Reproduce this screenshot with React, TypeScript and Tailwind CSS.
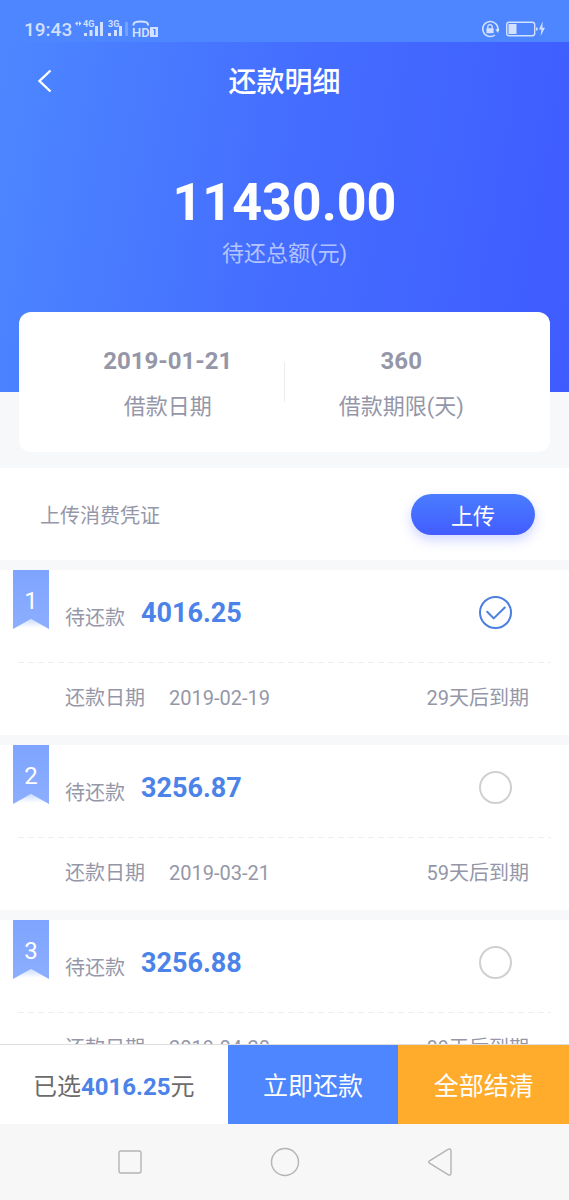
import { useState } from "react";

const loan = [
  { value: "2019-01-21", label: "借款日期" },
  { value: "360", label: "借款期限(天)" },
];

const bills = [
  { amount: "4016.25", date: "2019-02-19", due: "29天后到期" },
  { amount: "3256.87", date: "2019-03-21", due: "59天后到期" },
  { amount: "3256.88", date: "2019-04-20", due: "89天后到期" },
];

function StatusBar() {
  return (
    <div className="flex h-[42px] shrink-0 items-end justify-between bg-[#4d86ff] px-6 text-white/75">
      <div className="flex items-end">
        <span className="w-[51px] text-[19px] leading-6 font-medium">19:43</span>
        <svg width="86" height="24" viewBox="0 0 86 24" fill="currentColor" aria-hidden>
          <path d="M0 5.5 2.5 3v5zM2.5 5h1v1h-1zM6.5 5.5 4 3v5z" />
          <text x="8" y="9" fontSize="9" fontWeight="700">4G</text>
          <path d="M9 15h3v3H9zM14.5 12h3v6h-3zM20 8h3v10h-3zM25 4h3v14h-3z" />
          <text x="33" y="9" fontSize="9" fontWeight="700">3G</text>
          <path d="M33 15h3v3h-3zM39 12h3v6h-3zM44 8h3v10h-3z" />
          <path d="M50 4h3v14h-3z" opacity=".3" />
          <path d="M58.5 7.5v-1c0-4 14.500-4 14.500 0v1" fill="none" stroke="currentColor" strokeWidth="2" />
          <text x="57" y="19" fontSize="13" fontWeight="600">HD</text>
          <path fillRule="evenodd" d="M75 9h8v10h-8zM78 11v1h1v5h1.5v-6z" />
        </svg>
      </div>
      <svg width="64" height="24" viewBox="0 0 64 24" fill="none" stroke="currentColor" aria-hidden>
        <path d="M14 17A7.600 7.600 0 1 1 16.800 12.500" strokeWidth="1.5" />
        <path d="m14.200 11.600 4.200-.6-1.400 4z" fill="currentColor" stroke="none" />
        <path d="M5.400 10.200h7.200v5H5.400z" fill="currentColor" stroke="none" />
        <path d="M6.800 10.600V8.800a2.200 2.200 0 0 1 4.400 0v1.800" strokeWidth="1.4" />
        <rect x="25.700" y="4.200" width="28" height="13.600" rx="2.5" strokeWidth="1.4" />
        <path d="M27.500 6h8v10h-8zM55 9.500h1.600v3H55z" fill="currentColor" stroke="none" />
        <path d="M61.600 3.500 58 11.500h2.400l-.8 6.500L64 9.800h-2.600z" fill="currentColor" stroke="none" />
      </svg>
    </div>
  );
}

function Ribbon({ index }: { index: number }) {
  return (
    <div className="relative h-[59px] w-9 shrink-0 text-center text-[24px] leading-[62px] text-white">
      <svg className="absolute inset-0" width="36" height="59" viewBox="0 0 36 59" aria-hidden>
        <defs>
          <linearGradient id="glow" x1="0" y1="0" x2="0" y2="1">
            <stop offset="0" stopColor="#c9dcff" />
            <stop offset="1" stopColor="#ffffff" />
          </linearGradient>
          <linearGradient id="ribbon" x1="0" y1="0" x2="0" y2="1">
            <stop offset="0" stopColor="#7ea4ff" />
            <stop offset="1" stopColor="#8caeff" />
          </linearGradient>
        </defs>
        <path d="M2 58 18 49l16 9z" fill="url(#glow)" />
        <path d="M0 0h36v59L18 49 0 59z" fill="url(#ribbon)" />
      </svg>
      <span className="relative">{index}</span>
    </div>
  );
}

type BillProps = {
  index: number;
  amount: string;
  date: string;
  due: string;
  checked: boolean;
  onSelect: () => void;
};

function Bill({ index, amount, date, due, checked, onSelect }: BillProps) {
  return (
    <li className="bg-white">
      <div className="flex h-[92px] items-start pl-[13px]">
        <Ribbon index={index} />
        <label className="flex h-[84px] flex-1 items-center justify-between pr-[57px] pl-4">
          <span className="flex items-end gap-4 pt-0.5">
            <span className="text-[20px] leading-[30px]">待还款</span>
            <span className="text-[27px] leading-10 font-bold text-[#4b83e8]">{amount}</span>
          </span>
          <span className="relative size-[33px]">
            <input
              type="radio"
              name="bill"
              checked={checked}
              onChange={onSelect}
              className="block size-full appearance-none rounded-full border-2 border-[#d0d0d0] checked:border-[#4b7fe0]"
            />
            {checked && (
              <svg
                className="pointer-events-none absolute inset-0"
                width="33"
                height="33"
                viewBox="0 0 33 33"
                fill="none"
                aria-hidden
              >
                <path
                  d="m8.200 15.800 6.500 6.600L25.800 11.500"
                  stroke="#4b7fe0"
                  strokeWidth="2"
                  strokeLinecap="round"
                  strokeLinejoin="round"
                />
              </svg>
            )}
          </span>
        </label>
      </div>
      <div className="mx-[18px] h-px bg-[repeating-linear-gradient(90deg,#efefef_0_6px,transparent_6px_10px)]" />
      <div className="flex h-[72px] items-center pr-10 pb-0.5 pl-[65px] text-[20px]">
        <span>还款日期</span>
        <span className="ml-6">{date}</span>
        <span className="ml-auto">{due}</span>
      </div>
    </li>
  );
}

export default function App() {
  const [selected, setSelected] = useState(0);

  return (
    <div className="flex h-screen flex-col bg-[#f6f8fa] font-[Roboto,'Noto_Sans_CJK_SC',sans-serif] text-[#9597a8]">
      <StatusBar />

      <main className="min-h-0 flex-1 overflow-y-auto [scrollbar-width:none]">
        <header className="bg-linear-[100deg,#4d87ff,#446dff_50%,#3f5bff] pb-[124px] text-center text-white">
          <div className="grid h-[78px] grid-cols-[1fr_auto_1fr] items-center">
            <button type="button" aria-label="返回" className="ml-9 w-5">
              <svg width="18" height="24" viewBox="0 0 18 24" fill="none" aria-hidden>
                <path d="M14.5 1.500 3.500 12l11 10.500" stroke="currentColor" strokeWidth="2.4" />
              </svg>
            </button>
            <h1 className="pt-1 text-[28px] leading-10 font-medium">还款明细</h1>
          </div>
          <p className="pt-[52px] text-[52px] leading-[62px] font-bold">11430.00</p>
          <p className="pt-1.5 text-[22px] leading-7 text-white/60">待还总额(元)</p>
        </header>

        <section className="mx-[19px] -mt-20 grid grid-cols-2 rounded-xl bg-white pt-[34px] pb-[30px] text-center">
          {loan.map((item, i) => (
            <div key={item.label} className={i === 0 ? "relative pl-8" : "pr-8"}>
              <p className="text-[24px] leading-[30px] font-bold">{item.value}</p>
              <p className="pt-4 text-[22px] leading-[30px]">{item.label}</p>
              {i === 0 && <span className="absolute top-4 right-0 h-10 w-px bg-[#ececf0]" />}
            </div>
          ))}
        </section>

        <section className="mt-4 flex h-[92px] items-center justify-between bg-white pr-[34px] pl-10">
          <span className="pt-1 text-[20px]">上传消费凭证</span>
          <button
            type="button"
            className="h-[41px] w-[124px] rounded-full bg-linear-to-b from-[#4a7cff] to-[#435cff] pt-1 text-[22px] text-white shadow-[0_5px_12px_#435cff40]"
          >
            上传
          </button>
        </section>

        <ul className="mt-[10px] space-y-[10px]">
          {bills.map((bill, i) => (
            <Bill
              key={bill.date}
              index={i + 1}
              {...bill}
              checked={selected === i}
              onSelect={() => setSelected(i)}
            />
          ))}
        </ul>
      </main>

      <footer className="grid h-20 shrink-0 grid-cols-[4fr_3fr_3fr] border-t border-[#dedede] bg-white text-[25px] text-white">
        <p className="flex items-center justify-center pt-1 text-[24px] text-[#6b6b6b]">
          已选<strong className="font-bold text-[#4b83e8]">{bills[selected].amount}</strong>元
        </p>
        <button type="button" className="bg-[#4d86ff] pt-1">立即还款</button>
        <button type="button" className="bg-[#ffab2b] pt-1">全部结清</button>
      </footer>

      {/* 系统导航栏 */}
      <nav className="grid h-[76px] shrink-0 grid-cols-3 place-items-center bg-[#f7f7f7] px-[52px] text-[#b4b4b4]">
        <button type="button" aria-label="最近任务">
          <svg width="30" height="30" viewBox="0 0 30 30" fill="none" stroke="currentColor" strokeWidth="1.4" aria-hidden>
            <rect x="4" y="4" width="22" height="22" rx="2" />
          </svg>
        </button>
        <button type="button" aria-label="主屏幕">
          <svg width="30" height="30" viewBox="0 0 30 30" fill="none" stroke="currentColor" strokeWidth="1.4" aria-hidden>
            <circle cx="15" cy="15" r="13.5" />
          </svg>
        </button>
        <button type="button" aria-label="返回">
          <svg width="30" height="30" viewBox="0 0 30 30" fill="none" stroke="currentColor" strokeWidth="1.4" aria-hidden>
            <path d="M4.5 13.800 23 2.400q3-1.400 3 1.600v22q0 3-3 1.600L4.500 16.200q-1.600-1.200 0-2.400z" />
          </svg>
        </button>
      </nav>
    </div>
  );
}
